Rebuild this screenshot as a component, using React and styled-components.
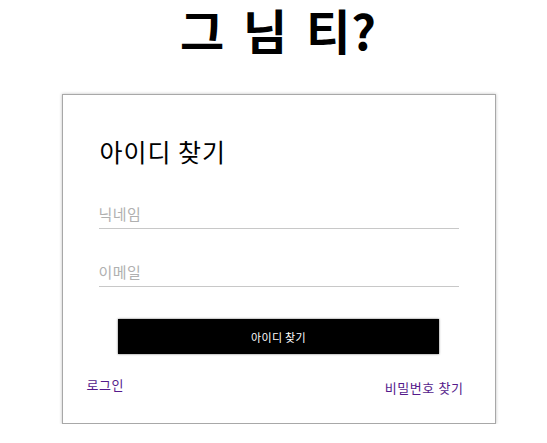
import React from "react";
import styled, { createGlobalStyle } from "styled-components";

const Global = createGlobalStyle`
  html, body { margin: 0; padding: 0; background: #fff; }
  body { font-family: "Noto Sans CJK KR", "Noto Sans", sans-serif; color: #000; }
  * { box-sizing: border-box; }
`;

const Page = styled.div`
  display: flex;
  flex-direction: column;
  align-items: center;
  padding-left: 10px;
`;

const Logo = styled.h1`
  margin: 0;
  font-size: 48px;
  line-height: 58px;
  padding-top: 0;
  font-weight: 700;
  letter-spacing: 1px;
  word-spacing: 6px;
`;

const Card = styled.div`
  width: 434px;
  height: 330px;
  margin-top: 36px;
  border: 1px solid #a8a8a8;
  box-shadow: 0 0 3px rgba(0, 0, 0, 0.25);
  padding-top: 38px;
  display: flex;
  flex-direction: column;
`;

const Heading = styled.h2`
  margin: 0 0 30px 37px;
  font-size: 25px;
  line-height: 36px;
  font-weight: 400;
  letter-spacing: 1px;
`;

const Field = styled.input`
  display: block;
  width: 360px;
  height: 30px;
  margin: 0 0 ${(p) => p.$gap}px 36px;
  padding: 0;
  border: none;
  border-bottom: 1px solid #c8c8c8;
  outline: none;
  font-family: inherit;
  font-size: 15px;
  letter-spacing: 0.5px;
  background: transparent;
  &::placeholder { color: #b0b0b0; }
`;

const Submit = styled.button`
  align-self: center;
  width: 321px;
  height: 35px;
  margin-top: 32px;
  background: #000;
  color: #fff;
  border: none;
  box-shadow: 0 0 2px rgba(0, 0, 0, 0.6);
  font-family: inherit;
  font-size: 11px;
  letter-spacing: 0.3px;
  cursor: pointer;
`;

const Links = styled.div`
  display: flex;
  justify-content: space-between;
  align-items: flex-start;
  padding: 0 31px 0 24px;
  margin-top: 21px;
`;

const Link = styled.a`
  color: #551a8b;
  font-size: 13px;
  line-height: 19px;
  letter-spacing: 0.6px;
  text-decoration: none;
  margin-top: ${(p) => p.$drop || 0}px;
`;

export default function App() {
  return (
    <>
      <Global />
      <Page>
        <Logo>그 님 티?</Logo>
        <Card>
          <Heading>아이디 찾기</Heading>
          <Field placeholder="닉네임" $gap={28} />
          <Field placeholder="이메일" $gap={0} />
          <Submit>아이디 찾기</Submit>
          <Links>
            <Link href="#">로그인</Link>
            <Link href="#" $drop={3}>비밀번호 찾기</Link>
          </Links>
        </Card>
      </Page>
    </>
  );
}
